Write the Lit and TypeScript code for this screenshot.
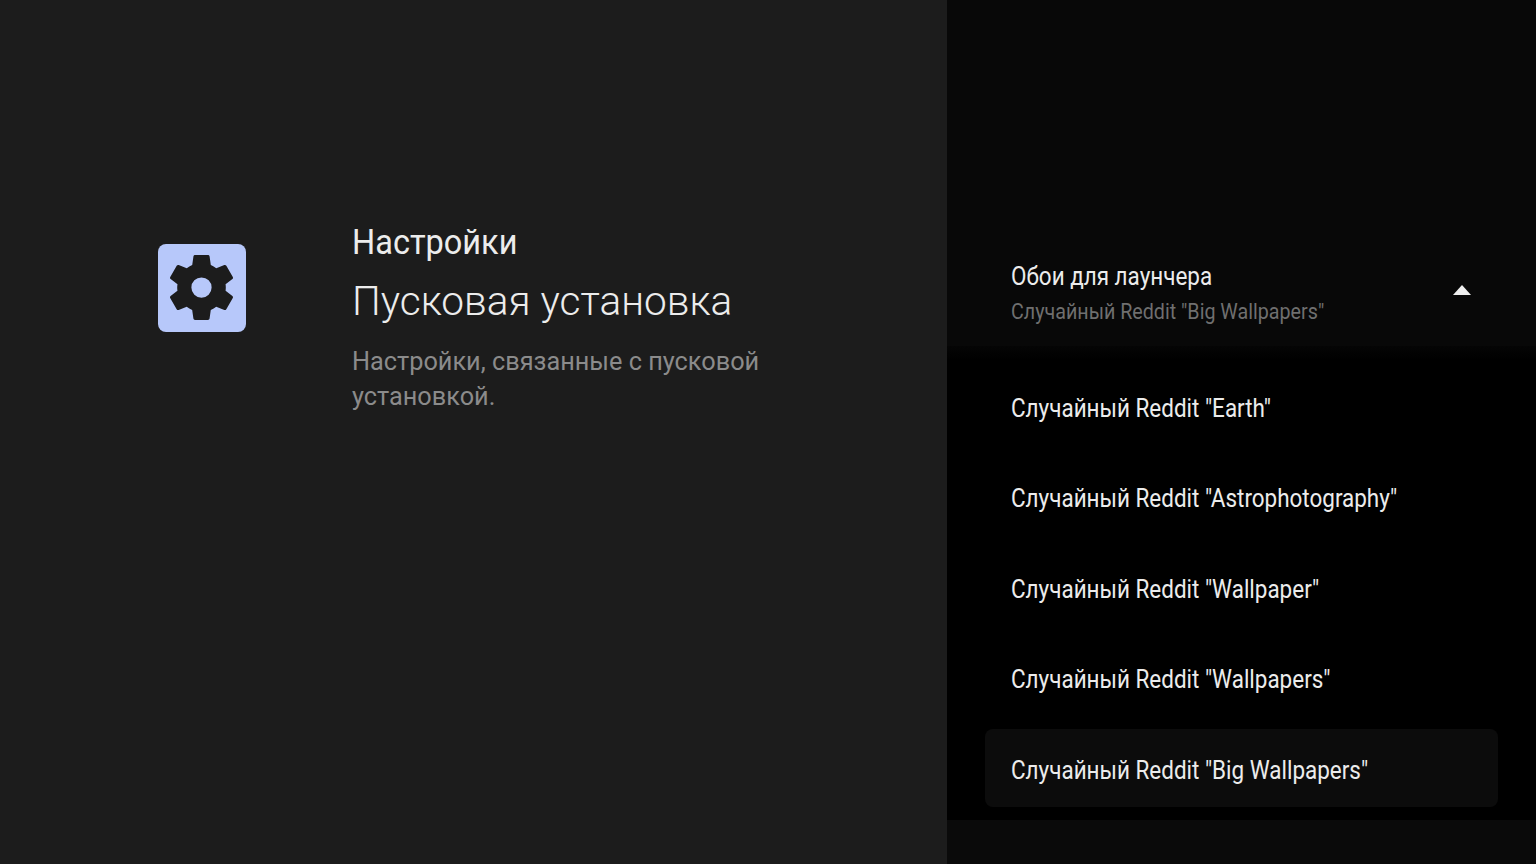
import { LitElement, css, html, svg } from "lit";
import { customElement, property } from "lit/decorators.js";

const OPTIONS = [
  'Случайный Reddit "Earth"',
  'Случайный Reddit "Astrophotography"',
  'Случайный Reddit "Wallpaper"',
  'Случайный Reddit "Wallpapers"',
  'Случайный Reddit "Big Wallpapers"',
];

const GEAR = svg`<path fill-rule="evenodd" d="M19.14 12.94c.04-.3.06-.61.06-.94 0-.32-.02-.64-.07-.94l2.03-1.58c.18-.14.23-.41.12-.61l-1.92-3.32c-.12-.22-.37-.29-.59-.22l-2.39.96c-.5-.38-1.03-.7-1.62-.94l-.36-2.54c-.04-.24-.24-.41-.48-.41h-3.84c-.24 0-.43.17-.47.41l-.36 2.54c-.59.24-1.13.57-1.62.94l-2.39-.96c-.22-.08-.47 0-.59.22L2.74 8.87c-.12.21-.08.47.12.61l2.03 1.58c-.05.3-.09.63-.09.94s.02.64.07.94l-2.03 1.58c-.18.14-.23.41-.12.61l1.92 3.32c.12.22.37.29.59.22l2.39-.96c.5.38 1.03.7 1.62.94l.36 2.54c.05.24.24.41.48.41h3.84c.24 0 .44-.17.47-.41l.36-2.54c.59-.24 1.13-.56 1.62-.94l2.39.96c.22.08.47 0 .59-.22l1.92-3.32c.12-.22.07-.47-.12-.61l-2.01-1.58zM12 15a3 3 0 1 1 0-6 3 3 0 0 1 0 6z"/>`;

@customElement("app-root")
export class AppRoot extends LitElement {
  @property({ type: Number })
  selected: number = 4;

  render() {
    return html`
      <div class="page">
        <section class="intro">
          <div class="app-icon">
            <svg viewBox="0 0 24 24" width="81" height="81">${GEAR}</svg>
          </div>
          <div class="copy">
            <div class="eyebrow"><span>Настройки</span></div>
            <h1>Пусковая установка</h1>
            <p>Настройки, связанные с пусковой установкой.</p>
          </div>
        </section>
        <section class="panel">
          <div class="head">
            <div class="head-text">
              <div class="label"><span>Обои для лаунчера</span></div>
              <div class="value"><span>Случайный Reddit "Big Wallpapers"</span></div>
            </div>
            <div class="caret"></div>
          </div>
          <div class="list">
            ${OPTIONS.map(
              (o, i) => html`
                <div class="item ${i === this.selected ? "focused" : ""}">
                  <span>${o}</span>
                </div>
              `,
            )}
          </div>
        </section>
      </div>
    `;
  }

  static styles = css`
    :host {
      display: block;
      font-family: "Roboto", "Liberation Sans", sans-serif;
    }

    .page {
      display: flex;
      width: 1536px;
      height: 864px;
      overflow: hidden;
      background: #1c1c1c;
    }

    .intro {
      box-sizing: border-box;
      width: 947px;
      flex: none;
      display: flex;
      align-items: flex-start;
      padding: 222px 0 0 158px;
    }

    .app-icon {
      width: 87.5px;
      height: 87.5px;
      margin-top: 22px;
      border-radius: 8px;
      background: #b7c8fa;
      display: flex;
      align-items: center;
      justify-content: center;
      flex: none;
      fill: #1c1c1c;
    }

    .copy {
      margin-left: 106.5px;
      width: 440px;
    }

    .eyebrow {
      font-size: 35px;
      line-height: 42px;
      color: #ececec;
    }

    .eyebrow span,
    .label span,
    .value span,
    .item span {
      display: inline-block;
      transform-origin: left center;
      white-space: nowrap;
    }

    .eyebrow span {
      transform: scaleX(0.929);
    }

    .label span,
    .item span {
      transform: scaleX(0.898);
    }

    .value span {
      transform: scaleX(0.875);
    }

    h1 {
      margin: 11px 0 0;
      font-size: 40.6px;
      line-height: 52px;
      font-weight: 300;
      color: #ececec;
    }

    p {
      margin: 17px 0 0;
      font-size: 25.3px;
      line-height: 35px;
      font-weight: 400;
      color: #8b8b8b;
    }

    .panel {
      flex: 1;
      display: flex;
      flex-direction: column;
      background: #0a0a0a;
    }

    .head {
      box-sizing: border-box;
      height: 346px;
      padding: 0 64px 21px 64px;
      display: flex;
      align-items: flex-end;
      justify-content: space-between;
      background: #080808;
    }

    .caret {
      width: 0;
      height: 0;
      margin: 0 1px 30px 0;
      border-left: 9px solid transparent;
      border-right: 9px solid transparent;
      border-bottom: 10px solid #eeeeee;
    }

    .label {
      font-size: 25px;
      line-height: 30px;
      color: #ececec;
    }

    .value {
      margin-top: 5px;
      font-size: 22.5px;
      line-height: 28px;
      color: #6f6f6f;
    }

    .list {
      box-sizing: border-box;
      height: 474px;
      padding: 21px 38px 0;
      display: flex;
      flex-direction: column;
      gap: 12.5px;
      background: linear-gradient(#050505, #000 14px);
    }

    .item {
      box-sizing: border-box;
      height: 78px;
      flex: none;
      padding: 4px 26px 0;
      display: flex;
      align-items: center;
      border-radius: 8px;
      font-size: 25px;
      color: #ececec;
    }

    .item.focused {
      background: #0c0c0c;
    }
  `;
}

declare global {
  interface HTMLElementTagNameMap {
    "app-root": AppRoot;
  }
}
